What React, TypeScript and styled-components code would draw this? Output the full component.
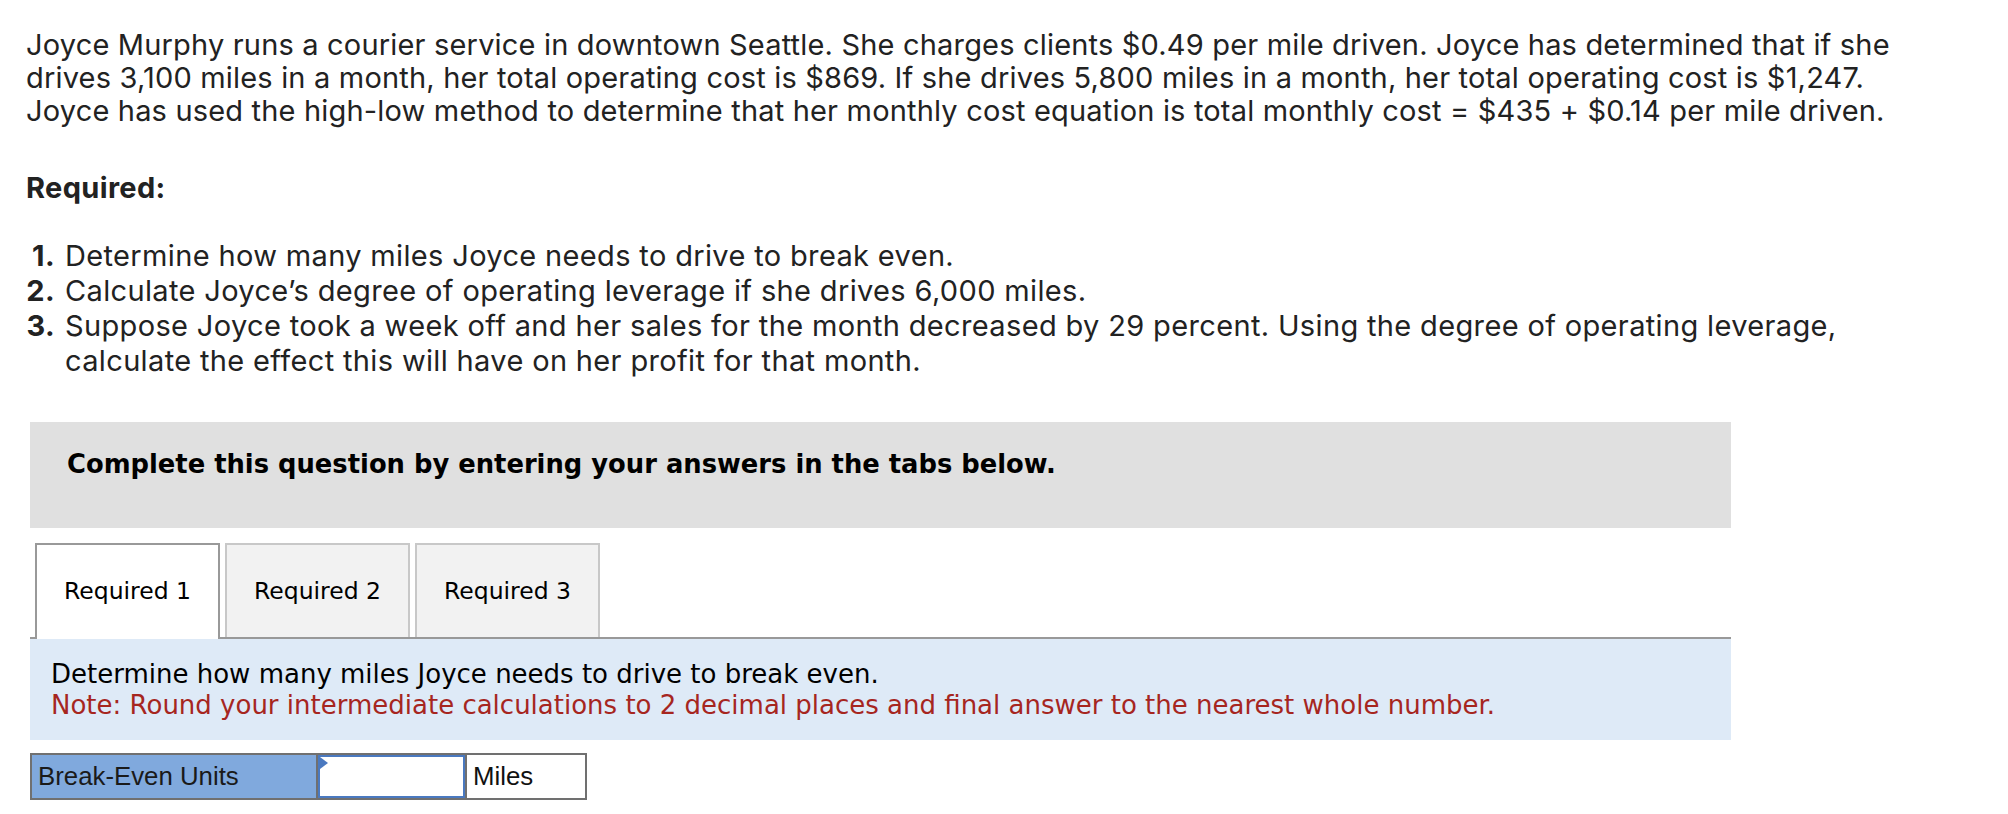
import React from "react";
import styled, { createGlobalStyle } from "styled-components";

const Global = createGlobalStyle`
  html, body { margin: 0; padding: 0; background: #ffffff; }
  body { font-family: Inter, "Liberation Sans", sans-serif; color: #222222; }
`;

const Page = styled.div`
  width: 2008px;
  padding-bottom: 20px;
`;

const Intro = styled.p`
  margin: 0;
  padding: 28px 0 0 26px;
  width: 1890px;
  font-family: Inter, sans-serif;
  font-size: 29px;
  letter-spacing: 0.18px;
  line-height: 33px;
  color: #222222;
`;

const Heading = styled.h3`
  margin: 44px 0 0 26px;
  font-family: Inter, sans-serif;
  font-size: 29px;
  letter-spacing: 0.35px;
  line-height: 33px;
  font-weight: 700;
  color: #222222;
`;

const List = styled.ol`
  list-style: none;
  margin: 34px 0 0 0;
  padding: 0;
  width: 1900px;
  font-family: Inter, sans-serif;
  font-size: 29px;
  letter-spacing: 0.35px;
  line-height: 35px;
  color: #222222;
`;

const Item = styled.li`
  display: grid;
  grid-template-columns: 30px 1fr;
  column-gap: 10px;
  padding-left: 25px;
`;

const Num = styled.span`
  font-weight: 700;
  text-align: right;
`;

const Panel = styled.section`
  margin: 44px 0 0 30px;
  width: 1701px;
`;

const Instruction = styled.div`
  height: 106px;
  box-sizing: border-box;
  background: #e0e0e0;
  padding: 27px 0 0 37px;
  font-family: "DejaVu Sans", Verdana, sans-serif;
  font-weight: 700;
  font-size: 25.8px;
  line-height: 31px;
  color: #000000;
`;

const TabStrip = styled.div`
  display: flex;
  align-items: flex-end;
  gap: 5px;
  margin-top: 15px;
  padding-left: 5px;
  border-bottom: 2px solid #999999;
  height: 94px;
`;

const Tab = styled.div<{ $active?: boolean }>`
  box-sizing: border-box;
  width: 185px;
  height: ${(p) => (p.$active ? "96px" : "94px")};
  margin-bottom: ${(p) => (p.$active ? "-2px" : "0")};
  border: 2px solid ${(p) => (p.$active ? "#999999" : "#c8c8c8")};
  border-bottom: 0;
  background: ${(p) => (p.$active ? "#ffffff" : "#f2f2f2")};
  display: flex;
  align-items: center;
  justify-content: center;
  padding-bottom: ${(p) => (p.$active ? "2px" : "0")};
  font-family: "DejaVu Sans", Verdana, sans-serif;
  font-size: 23.5px;
  color: #000000;
`;

const Prompt = styled.div`
  background: #deeaf7;
  padding: 20px 21px 19px 21px;
  font-family: "DejaVu Sans", Verdana, sans-serif;
  font-size: 26px;
  line-height: 31px;
  color: #000000;
`;

const Note = styled.div`
  color: #a6261f;
`;

const AnswerRow = styled.div`
  display: flex;
  margin-top: 13px;
  height: 47px;
  font-family: "Liberation Sans", Arial, sans-serif;
  font-size: 25.8px;
`;

const LabelCell = styled.div`
  box-sizing: border-box;
  width: 286px;
  background: #80a9dd;
  border: 2px solid #707070;
  border-right: 0;
  display: flex;
  align-items: center;
  padding-left: 6px;
  color: #1a1a1a;
`;

const InputCell = styled.div`
  box-sizing: border-box;
  width: 149px;
  border-top: 2px solid #707070;
  border-bottom: 2px solid #707070;
  border-left: 2px solid #707070;
  display: flex;
  position: relative;
`;

const Field = styled.input`
  box-sizing: border-box;
  width: 100%;
  height: 100%;
  margin: 0;
  border: 2px solid #4a79c0;
  background: #ffffff;
  outline: none;
  font: inherit;
  padding: 0 6px;
`;

const Flag = styled.span`
  position: absolute;
  left: 2px;
  top: 2px;
  width: 0;
  height: 0;
  border-top: 6px solid transparent;
  border-bottom: 6px solid transparent;
  border-left: 8px solid #4a79c0;
`;

const UnitCell = styled.div`
  box-sizing: border-box;
  width: 122px;
  background: #ffffff;
  border: 2px solid #707070;
  display: flex;
  align-items: center;
  padding-left: 6px;
  color: #111111;
`;

export default function App() {
  return (
    <Page>
      <Global />
      <Intro>
        Joyce Murphy runs a courier service in downtown Seattle. She charges clients $0.49 per mile driven. Joyce has
        determined that if she drives 3,100 miles in a month, her total operating cost is $869. If she drives 5,800
        miles in a month, her total operating cost is $1,247. Joyce has used the high-low method to determine that her
        monthly cost equation is total monthly cost = $435 + $0.14 per mile driven.
      </Intro>
      <Heading>Required:</Heading>
      <List>
        <Item>
          <Num>1.</Num>
          <span>Determine how many miles Joyce needs to drive to break even.</span>
        </Item>
        <Item>
          <Num>2.</Num>
          <span>Calculate Joyce’s degree of operating leverage if she drives 6,000 miles.</span>
        </Item>
        <Item>
          <Num>3.</Num>
          <span>
            Suppose Joyce took a week off and her sales for the month decreased by 29 percent. Using the degree of
            operating leverage, calculate the effect this will have on her profit for that month.
          </span>
        </Item>
      </List>
      <Panel>
        <Instruction>Complete this question by entering your answers in the tabs below.</Instruction>
        <TabStrip>
          <Tab $active>Required 1</Tab>
          <Tab>Required 2</Tab>
          <Tab>Required 3</Tab>
        </TabStrip>
        <Prompt>
          <div>Determine how many miles Joyce needs to drive to break even.</div>
          <Note>
            Note: Round your intermediate calculations to 2 decimal places and final answer to the nearest whole number.
          </Note>
        </Prompt>
        <AnswerRow>
          <LabelCell>Break-Even Units</LabelCell>
          <InputCell>
            <Field type="text" aria-label="Break-Even Units" />
            <Flag />
          </InputCell>
          <UnitCell>Miles</UnitCell>
        </AnswerRow>
      </Panel>
    </Page>
  );
}
